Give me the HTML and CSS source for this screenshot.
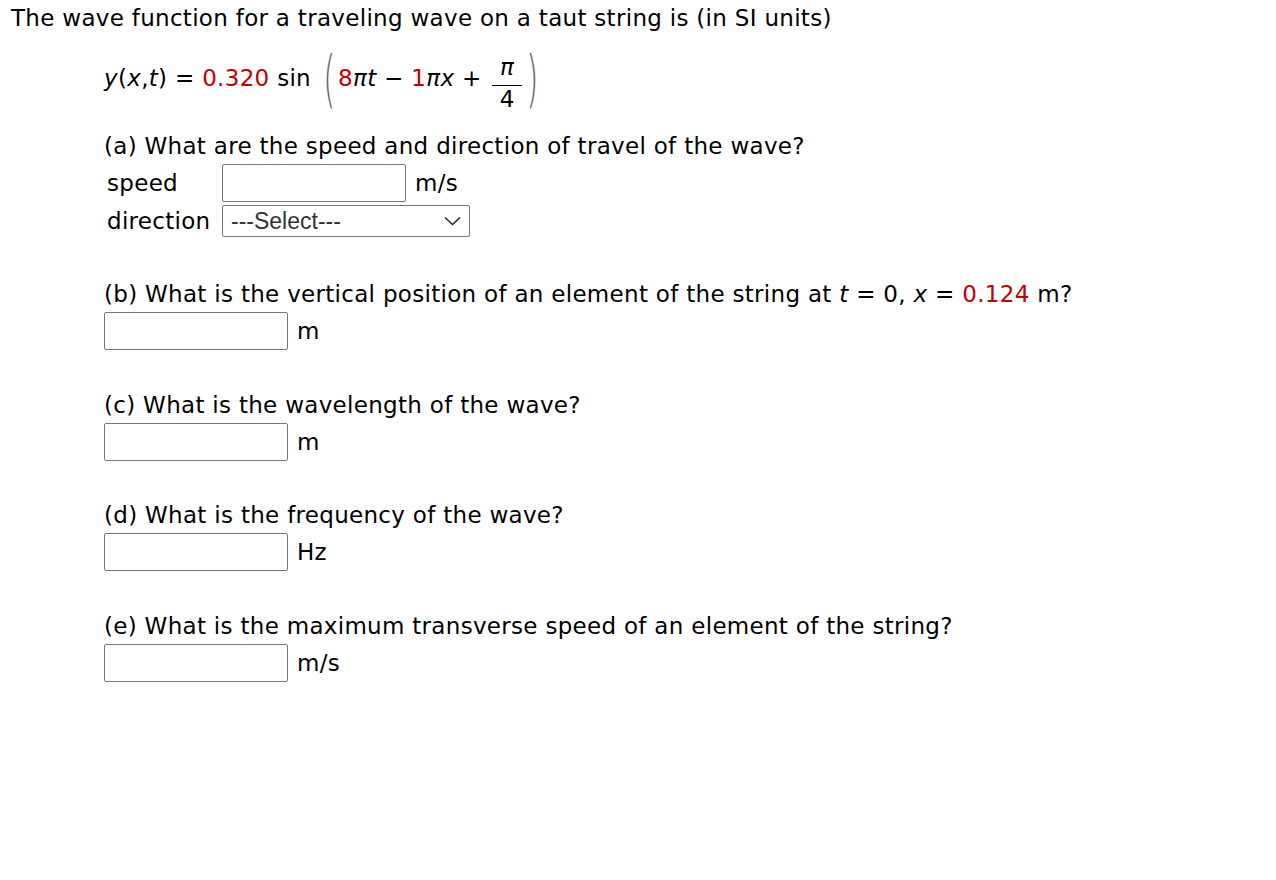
FILE: index.html
```html
<!DOCTYPE html>
<html>
<head>
<meta charset="utf-8">
<link rel="stylesheet" href="styles.css">
</head>
<body>
<p class="intro">The wave function for a traveling wave on a taut string is (in SI units)</p>
<div class="content">
  <div class="equation">
    <span class="it">y</span>(<span class="it">x</span>,<span class="it">t</span>)&nbsp;=&nbsp;<span class="red">0.320</span>&nbsp;sin&nbsp;<span class="paren">(</span><span class="red">8</span><span class="it">&pi;t</span>&nbsp;&minus;&nbsp;<span class="red">1</span><span class="it">&pi;x</span>&nbsp;+&nbsp;<span class="frac"><span class="num it">&pi;</span><span class="den">4</span></span><span class="paren">)</span>
  </div>

  <div class="part first">
    <p class="q">(a) What are the speed and direction of travel of the wave?</p>
    <div class="grid">
      <span class="lbl">speed</span>
      <div class="row"><input class="box" type="text"><span class="unit">m/s</span></div>
      <span class="lbl">direction</span>
      <div class="row"><div class="select"><span>---Select---</span><svg width="20" height="10" viewBox="0 0 20 10"><path d="M2 1.5 L9.5 8.5 L17 1.5" fill="none" stroke="#222" stroke-width="1.4"/></svg></div></div>
    </div>
  </div>

  <div class="part second">
    <p class="q">(b) What is the vertical position of an element of the string at <span class="it">t</span> = 0, <span class="it">x</span> = <span class="red">0.124</span> m?</p>
    <div class="row"><input class="box" type="text"><span class="unit">m</span></div>
  </div>

  <div class="part">
    <p class="q">(c) What is the wavelength of the wave?</p>
    <div class="row"><input class="box" type="text"><span class="unit">m</span></div>
  </div>

  <div class="part">
    <p class="q">(d) What is the frequency of the wave?</p>
    <div class="row"><input class="box" type="text"><span class="unit">Hz</span></div>
  </div>

  <div class="part">
    <p class="q">(e) What is the maximum transverse speed of an element of the string?</p>
    <div class="row"><input class="box" type="text"><span class="unit">m/s</span></div>
  </div>
</div>
</body>
</html>
```
FILE: styles.css
```css
html, body {
  margin: 0;
  padding: 0;
  background: #fff;
}
body {
  font-family: "DejaVu Sans", Verdana, sans-serif;
  font-size: 23px;
  letter-spacing: 0.3px;
  color: #000;
}
.intro {
  margin: 0;
  padding: 5px 0 0 11px;
  line-height: 26px;
}
.content {
  padding-left: 104px;
}
.it { font-style: italic; }
.red { color: #c00000; }
.equation {
  display: flex;
  align-items: center;
  margin-top: 17px;
  height: 60px;
  white-space: nowrap;
}
.paren {
  font-size: 62px;
  font-weight: 200;
  color: #666;
  transform: scaleX(0.5) translateY(1px);
  display: inline-block;
  line-height: 60px;
  margin: 0 -3px 0 -2px;
}
.frac {
  display: inline-flex;
  flex-direction: column;
  align-items: center;
  margin-left: 3px;
  padding-top: 10px;
  line-height: 24px;
}
.frac .num {
  border-bottom: 1px solid #000;
  padding: 0 5px 6px;
  width: 20px;
  text-align: center;
}
.frac .den {
  padding-top: 1px;
}
.part {
  margin-top: 41.5px;
}
.part.first {
  margin-top: 25px;
}
.part.second {
  margin-top: 44px;
}
.q {
  margin: 0;
  line-height: 26px;
}
.grid {
  display: grid;
  grid-template-columns: 118px auto;
  row-gap: 3px;
  margin-top: 5px;
  align-items: center;
}
.lbl {
  padding-left: 3px;
}
.row {
  display: flex;
  align-items: center;
  margin-top: 5px;
}
.grid .row { margin-top: 0; }
.box {
  width: 184px;
  height: 38px;
  box-sizing: border-box;
  border: 1px solid #767676;
  border-radius: 2px;
  margin: 0;
  padding: 0;
  background: #fff;
}
.unit {
  margin-left: 9px;
}
.select {
  width: 248px;
  height: 32px;
  box-sizing: border-box;
  border: 1px solid #767676;
  border-radius: 2px;
  display: flex;
  align-items: center;
  justify-content: space-between;
  padding: 0 6px 0 8px;
  font-family: "Liberation Sans", Arial, sans-serif;
  font-size: 23px;
  letter-spacing: 0;
  color: #333;
}
```
